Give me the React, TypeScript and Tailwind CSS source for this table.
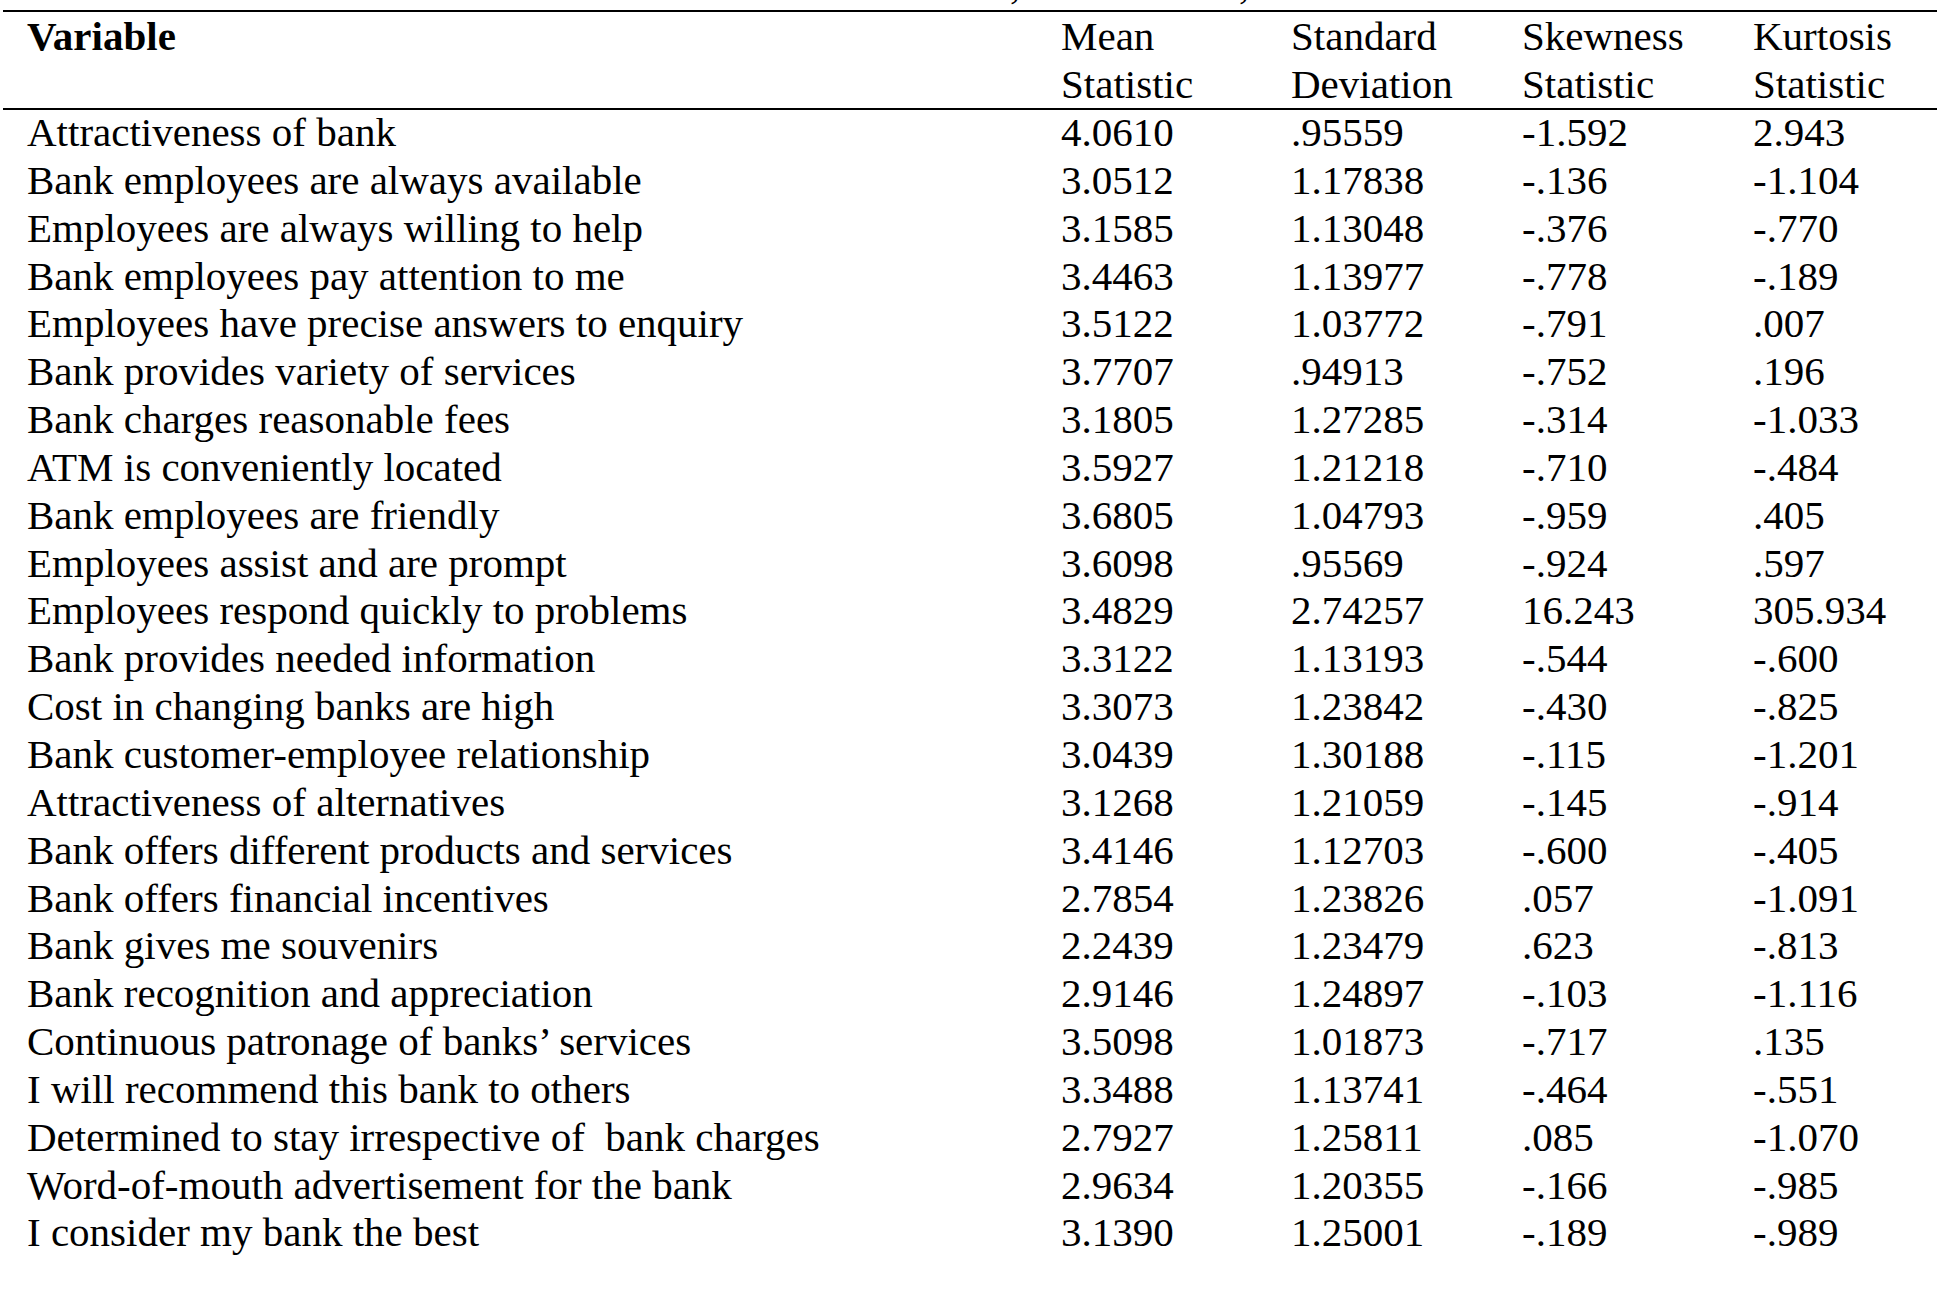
import React from 'react'

const rows: [string, string, string, string, string][] = [
  ['Attractiveness of bank', '4.0610', '.95559', '-1.592', '2.943'],
  ['Bank employees are always available', '3.0512', '1.17838', '-.136', '-1.104'],
  ['Employees are always willing to help', '3.1585', '1.13048', '-.376', '-.770'],
  ['Bank employees pay attention to me', '3.4463', '1.13977', '-.778', '-.189'],
  ['Employees have precise answers to enquiry', '3.5122', '1.03772', '-.791', '.007'],
  ['Bank provides variety of services', '3.7707', '.94913', '-.752', '.196'],
  ['Bank charges reasonable fees', '3.1805', '1.27285', '-.314', '-1.033'],
  ['ATM is conveniently located', '3.5927', '1.21218', '-.710', '-.484'],
  ['Bank employees are friendly', '3.6805', '1.04793', '-.959', '.405'],
  ['Employees assist and are prompt', '3.6098', '.95569', '-.924', '.597'],
  ['Employees respond quickly to problems', '3.4829', '2.74257', '16.243', '305.934'],
  ['Bank provides needed information', '3.3122', '1.13193', '-.544', '-.600'],
  ['Cost in changing banks are high', '3.3073', '1.23842', '-.430', '-.825'],
  ['Bank customer-employee relationship', '3.0439', '1.30188', '-.115', '-1.201'],
  ['Attractiveness of alternatives', '3.1268', '1.21059', '-.145', '-.914'],
  ['Bank offers different products and services', '3.4146', '1.12703', '-.600', '-.405'],
  ['Bank offers financial incentives', '2.7854', '1.23826', '.057', '-1.091'],
  ['Bank gives me souvenirs', '2.2439', '1.23479', '.623', '-.813'],
  ['Bank recognition and appreciation', '2.9146', '1.24897', '-.103', '-1.116'],
  ['Continuous patronage of banks\u2019 services', '3.5098', '1.01873', '-.717', '.135'],
  ['I will recommend this bank to others', '3.3488', '1.13741', '-.464', '-.551'],
  ['Determined to stay irrespective of\u00a0 bank charges', '2.7927', '1.25811', '.085', '-1.070'],
  ['Word-of-mouth advertisement for the bank', '2.9634', '1.20355', '-.166', '-.985'],
  ['I consider my bank the best', '3.1390', '1.25001', '-.189', '-.989'],
]

const cols = 'grid grid-cols-[1058px_229px_232px_231px_184px]'

export default function App() {
  return (
    <div className="min-h-[1292px] w-[1944px] bg-white text-black font-['Liberation_Serif','Times_New_Roman',serif] text-[41px] leading-[48px]">
      {/* cut-off caption above the table */}
      <div className="relative h-[10px] overflow-hidden">
        <span className="absolute left-[1010px] top-[-36px] leading-none">,</span>
        <span className="absolute left-[1239px] top-[-36px] leading-none">,</span>
      </div>

      <div className="ml-[3px] w-[1934px]">
        {/* header */}
        <div className={`${cols} border-t-2 border-b-2 border-black`}>
          <div className="pl-[24px] font-bold">Variable</div>
          <div>Mean<br />Statistic</div>
          <div className="pl-[1px]">Standard<br />Deviation</div>
          <div>Skewness<br />Statistic</div>
          <div>Kurtosis<br />Statistic</div>
        </div>

        {/* body */}
        <div className="-mt-[1px] leading-[47.85px]">
          {rows.map((r) => (
            <div key={r[0]} className={cols}>
              <div className="pl-[24px] whitespace-nowrap">{r[0]}</div>
              <div>{r[1]}</div>
              <div className="pl-[1px]">{r[2]}</div>
              <div>{r[3]}</div>
              <div>{r[4]}</div>
            </div>
          ))}
        </div>
      </div>
    </div>
  )
}
